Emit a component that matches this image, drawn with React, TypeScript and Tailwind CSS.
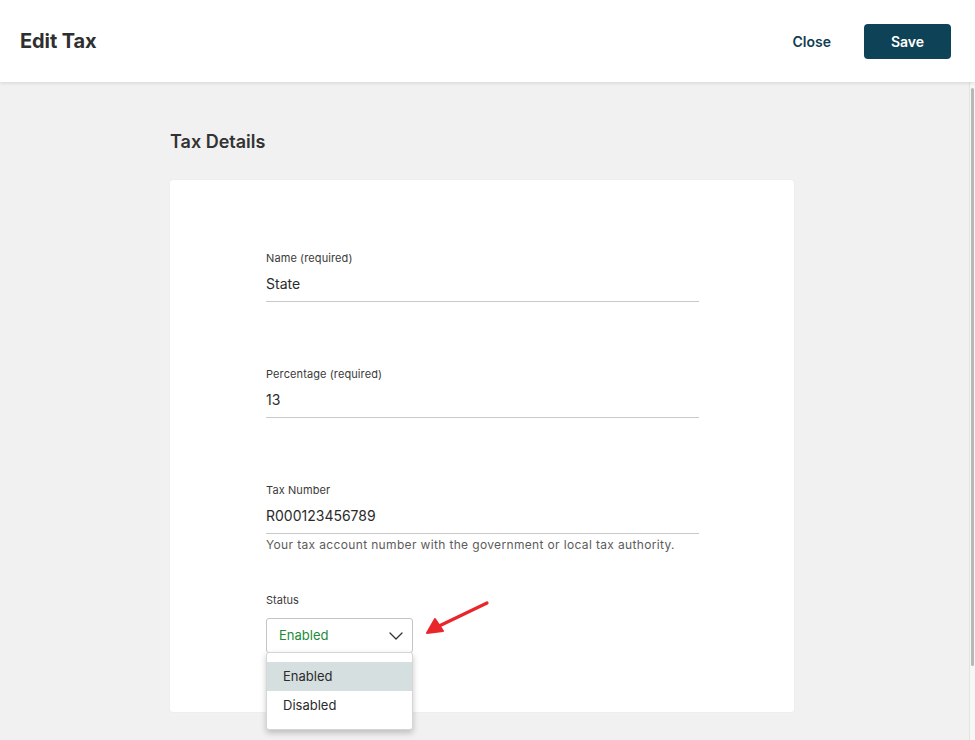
import React from "react";

const font = { fontFamily: "Inter, 'Noto Sans', sans-serif" };

type FieldProps = {
	label: string;
	value: string;
	help?: string;
};

const Field = ({ label, value, help }: FieldProps) => (
	<div className="w-[433px]">
		<div className="text-[11px] leading-4 tracking-[0.1px] text-[#3a3a3a]">{label}</div>
		<div className="mt-[8px] pb-[7px] border-b border-[#c9c9c9] text-[14px] leading-5 text-[#2b2b2b]">
			{value}
		</div>
		{help && (
			<div className="mt-[3px] text-[12px] leading-4 tracking-[0.35px] text-[#5c5c5c]">
				{help}
			</div>
		)}
	</div>
);

const Chevron = () => (
	<svg width="14" height="8" viewBox="0 0 14 8" fill="none">
		<path d="M1 1l6 6 6-6" stroke="#333" strokeWidth="1.3" strokeLinecap="round" strokeLinejoin="round" />
	</svg>
);

export default function App() {
	return (
		<div className="relative h-[740px] overflow-hidden bg-[#f1f1f1]" style={font}>
			{/* Header */}
			<header className="relative z-10 h-[82px] bg-white shadow-[0_1px_4px_rgba(0,0,0,0.12)] flex items-center justify-between pl-5 pr-6">
				<h1 className="text-[20px] font-bold text-[#2f2f2f] tracking-[-0.1px]">Edit Tax</h1>
				<div className="flex items-center gap-[33px]">
					<button className="text-[14px] font-semibold text-[#113e52]">Close</button>
					<button className="w-[87px] h-[35px] rounded-[4px] bg-[#0e4257] text-white text-[14px] font-semibold">
						Save
					</button>
				</div>
			</header>

			{/* Content */}
			<main className="pl-[170px] pt-[50px]">
				<h2 className="text-[18px] leading-5 font-semibold text-[#333]">Tax Details</h2>

				<div className="mt-[28px] w-[624px] h-[532px] bg-white rounded-[3px] shadow-[0_0_2px_rgba(0,0,0,0.06)] pl-[96px] pt-[70px]">
					<Field label="Name (required)" value="State" />
					<div className="h-[64px]" />
					<Field label="Percentage (required)" value="13" />
					<div className="h-[64px]" />
					<Field
						label="Tax Number"
						value="R000123456789"
						help="Your tax account number with the government or local tax authority."
					/>

					<div className="mt-[39px] text-[11px] leading-4 text-[#3a3a3a]">Status</div>
					<div className="relative mt-[10px] w-[147px]">
						<div className="h-[35px] border border-[#c4c4c4] rounded-[3px] flex items-center justify-between pl-3 pr-[9px] bg-white">
							<span className="text-[13px] text-[#1d8a3a]">Enabled</span>
							<Chevron />
						</div>

						{/* Open menu */}
						<div className="absolute left-0 top-[34px] z-20 w-[147px] bg-white border border-[#d6d6d6] rounded-[3px] shadow-[0_3px_6px_rgba(0,0,0,0.22)] pt-[9px] pb-[8px]">
							<div className="h-[29px] flex items-center pl-4 bg-[#d5dfe0] text-[13px] text-[#2b2b2b]">Enabled</div>
							<div className="h-[30px] flex items-center pl-4 text-[13px] text-[#2b2b2b]">Disabled</div>
						</div>

						{/* Annotation arrow */}
						<svg className="absolute left-[155px] top-[-18px]" width="70" height="40" viewBox="0 0 70 40" fill="none">
							<path d="M66 3L16 27" stroke="#e8262b" strokeWidth="3.2" strokeLinecap="round" />
							<path d="M6 33L14 19L22 31Z" fill="#e8262b" stroke="#e8262b" strokeWidth="2" strokeLinejoin="round" />
						</svg>
					</div>
				</div>
			</main>

			{/* Scrollbar */}
			<div className="absolute right-0 top-[82px] bottom-0 w-[6px] bg-[#f7f7f7] border-l border-[#e3e3e3]">
				<div className="mx-auto mt-[6px] h-[578px] w-[3px] rounded-full bg-[#b8b8b8]" />
			</div>
		</div>
	);
}
